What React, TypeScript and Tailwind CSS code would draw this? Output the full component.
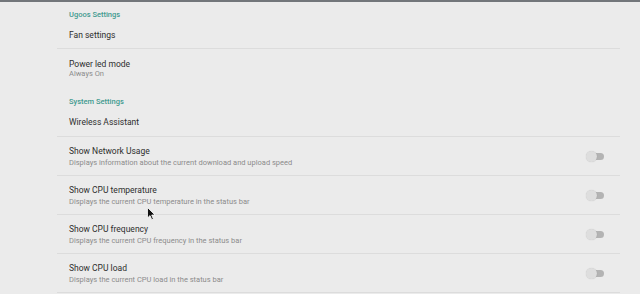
import React from "react";

type Item = { title: string; sub?: string; toggle?: boolean };

const font = { fontFamily: "Roboto, 'Noto Sans', sans-serif" };

function Header({ label, pt, pb }: { label: string; pt: string; pb: string }) {
  return (
    <div className={`pl-3 ${pt} ${pb}`}>
      <div className="text-[7.5px] leading-[10px] font-medium text-[#3f9a8f]">{label}</div>
    </div>
  );
}

function Toggle() {
  return (
    <div className="relative w-[18px] h-[12px] flex items-center">
      <div className="absolute left-[4px] w-[14px] h-[7px] rounded-full bg-[#b3b3b3]" />
      <div className="absolute left-0 w-[11px] h-[11px] rounded-full bg-[#dedede] shadow-[0_0_1px_rgba(0,0,0,0.2)]" />
    </div>
  );
}

function Row({ item, divider, cls }: { item: Item; divider: boolean; cls: string }) {
  return (
    <div className={`flex items-center pl-3 pr-[16px] ${cls} ${divider ? "border-b border-[#dcdcdc]" : ""}`}>
      <div className="flex-1">
        <div className="text-[8.5px] leading-[12px] text-[#2e2e2e]">{item.title}</div>
        {item.sub && <div className="mt-[1px] text-[7.5px] leading-[10px] text-[#8c8c8c]">{item.sub}</div>}
      </div>
      {item.toggle && <Toggle />}
    </div>
  );
}

const switches: Item[] = [
  { title: "Show Network Usage", sub: "Displays information about the current download and upload speed", toggle: true },
  { title: "Show CPU temperature", sub: "Displays the current CPU temperature in the status bar", toggle: true },
  { title: "Show CPU frequency", sub: "Displays the current CPU frequency in the status bar", toggle: true },
  { title: "Show CPU load", sub: "Displays the current CPU load in the status bar", toggle: true },
];

export default function App() {
  return (
    <div className="relative w-[640px] h-[294px] overflow-hidden bg-[#ebebeb]" style={font}>
      <div className="h-[2px] bg-[#72767a]" />
      <div className="pl-[57px] pr-[20px]">
        <Header label="Ugoos Settings" pt="pt-[8px]" pb="pb-[4px]" />
        <Row item={{ title: "Fan settings" }} divider cls="pt-[5px] pb-[7px]" />
        <Row item={{ title: "Power led mode" }} divider={false} cls="pt-[9px] pb-0" />
        <div className="pl-3 -mt-[1px] pb-[11px] text-[7.5px] leading-[10px] text-[#8c8c8c]">Always On</div>
        <Header label="System Settings" pt="pt-[7px]" pb="pb-[5px]" />
        <Row item={{ title: "Wireless Assistant" }} divider cls="pt-[4px] pb-[8px]" />
        {switches.map((s) => (
          <Row key={s.title} item={s} divider cls="pt-[8px] pb-[7px]" />
        ))}
      </div>
      {/* mouse pointer */}
      <svg className="absolute left-[147px] top-[207px]" width="9" height="14" viewBox="0 0 9 14">
        <path d="M0.5 0.5 L0.5 11 L3 8.6 L4.8 12.8 L6.4 12.1 L4.7 8 L8 8 Z" fill="#111" stroke="#fff" strokeWidth="0.8" />
      </svg>
    </div>
  );
}
